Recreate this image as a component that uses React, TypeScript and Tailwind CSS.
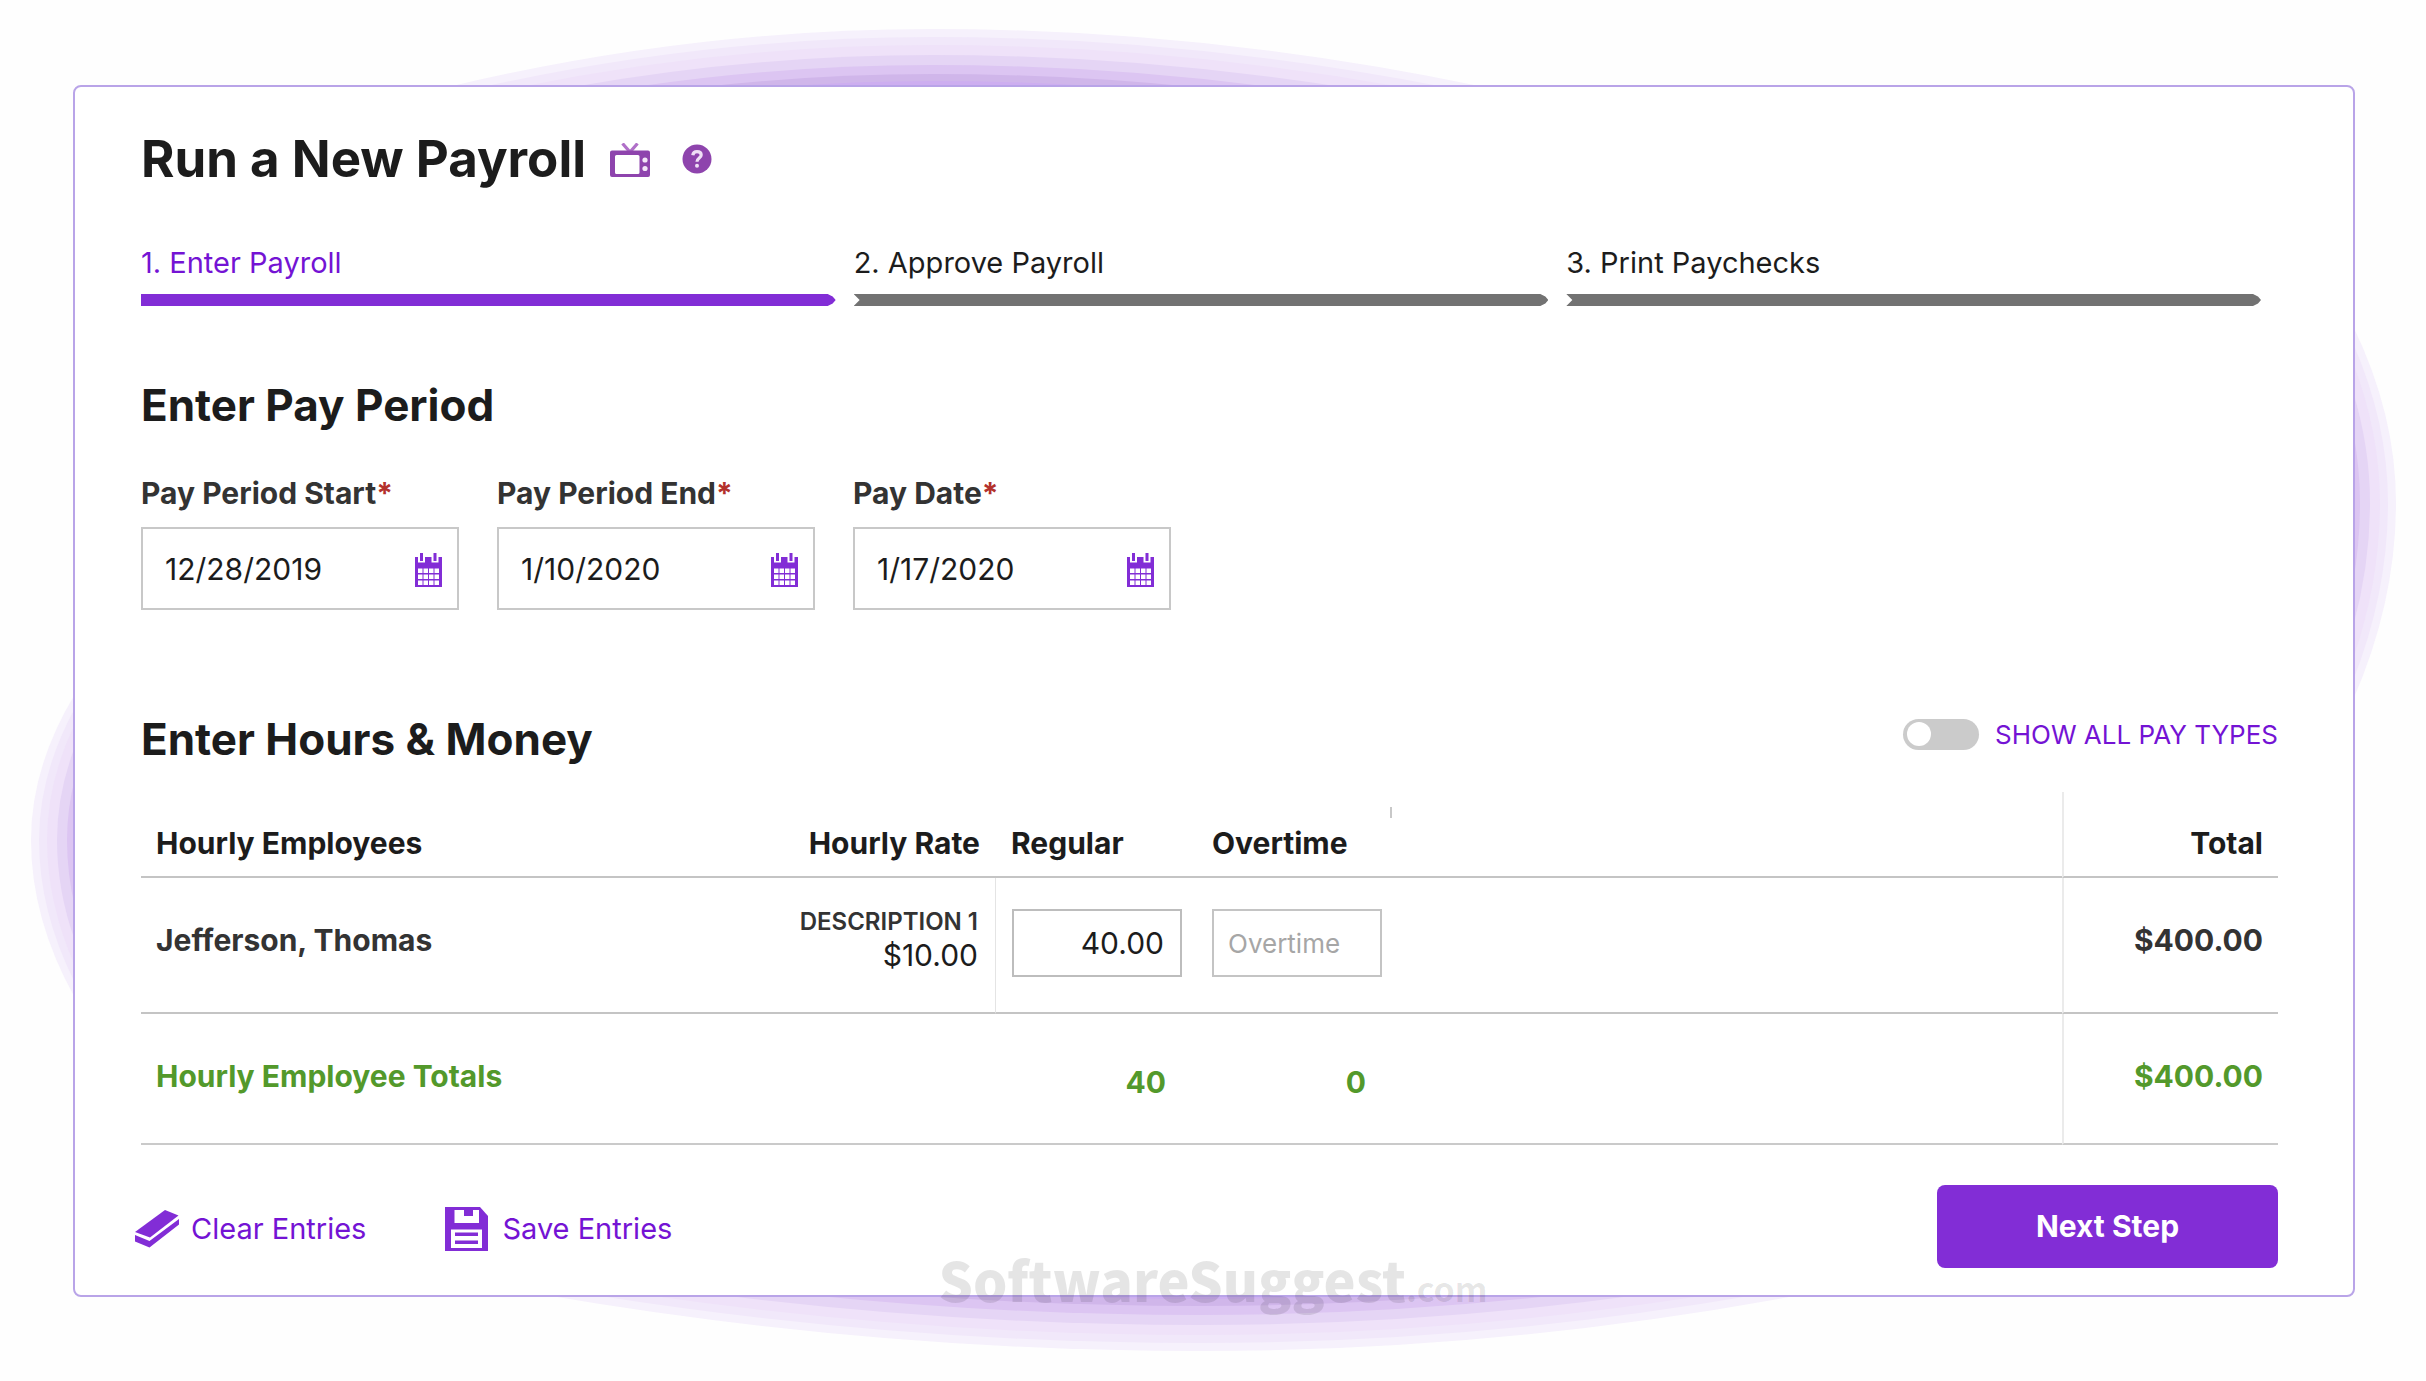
import { useState } from "react";

const RING_COLORS = ["#f6f1fc", "#f1e8fa", "#efe2f9", "#e5d5f5", "#dcc5f2", "#d0b6ea", "#cdaef0"];

const RING_DEPTHS = [0, 8, 16, 26, 36, 45, 52];

// A set of nested bulges that grow out of one side of the card.
function bulge(side: "top" | "bottom" | "left" | "right", base: number, start: number, peak: number, end: number, height: number) {
  return RING_DEPTHS.filter((depth) => height - depth > 2).map((depth, i) => {
    const h = height - depth;
    const k = Math.sqrt(h / height);
    const a = peak - (peak - start) * k;
    const b = peak + (end - peak) * k;
    const tip = side === "top" || side === "left" ? base - h : base + h;
    const p = (along: number, across: number) =>
      side === "top" || side === "bottom" ? `${along} ${across}` : `${across} ${along}`;
    const d = `M${p(a, base)} Q${p((a + peak) / 2, tip)} ${p(peak, tip)} Q${p((b + peak) / 2, tip)} ${p(b, base)} Z`;
    return <path key={side + i} d={d} fill={RING_COLORS[i]} />;
  });
}

function Backdrop() {
  return (
    <svg className="absolute inset-0 h-full w-full" viewBox="0 0 2426 1381" preserveAspectRatio="none" aria-hidden="true">
      {bulge("top", 87, 448, 932, 1484, 58)}
      {bulge("bottom", 1295, 545, 1200, 1800, 56)}
      {bulge("left", 75, 694, 840, 998, 44)}
      {bulge("right", 2353, 326, 503, 700, 43)}
    </svg>
  );
}

function TvIcon() {
  return (
    <svg width="40" height="34" viewBox="0 0 40 34" aria-hidden="true">
      <path d="M12.500 .5l7.500 8.500 7.500-8.500" fill="none" stroke="#b070c8" strokeWidth="3.200" />
      <path fillRule="evenodd" fill="#8e44ad" d="M2 7.500h36a2 2 0 0 1 2 2V32a2 2 0 0 1-2 2H2a2 2 0 0 1-2-2V9.500a2 2 0 0 1 2-2ZM6.500 12a1.500 1.500 0 0 0-1.500 1.500v16A1.500 1.500 0 0 0 6.500 31H28a1.500 1.500 0 0 0 1.500-1.500v-16A1.500 1.500 0 0 0 28 12Z" />
      <circle cx="35" cy="17" r="2.600" fill="#f3e6f8" />
      <circle cx="35" cy="25.500" r="2.600" fill="#f3e6f8" />
    </svg>
  );
}

function HelpIcon() {
  return (
    <svg width="30" height="30" viewBox="0 0 30 30" aria-hidden="true">
      <circle cx="15" cy="15" r="14.500" fill="#8e44ad" />
      <path d="M10.800 11.200c.3-2.400 1.900-3.600 4.200-3.600 2.500 0 4.200 1.300 4.200 3.400 0 3.200-4.200 3-4.200 6.800" fill="none" stroke="#efdff5" strokeWidth="3.200" />
      <circle cx="15" cy="21.800" r="2" fill="#efdff5" />
    </svg>
  );
}

function CalendarIcon() {
  return (
    <svg width="27" height="34" viewBox="0 0 27 34" aria-hidden="true">
      <path fill="#822dd6" d="M0 4h3v5.500h7V4h6.500v5.500h7V4H27v30H0Z" />
      <path fill="#822dd6" d="M5 0h3v8H5zM18.500 0h3v8h-3z" />
      <g fill="#fff">
        {[15.5, 21.5, 27.5].map((y) =>
          [3, 8.5, 14, 19.5].map((x) => <rect key={`${x}-${y}`} x={x} y={y} width="4.500" height="4.500" />),
        )}
      </g>
    </svg>
  );
}

function EraserIcon() {
  return (
    <svg width="44" height="38" viewBox="0 0 44 38" fill="#822dd6" aria-hidden="true">
      <path d="M30 0l13.500 5.500L15 27.500 0 22Z" />
      <path d="M0 25l14.500 6L44 9v5.500L14.500 37.500 0 31.500Z" />
    </svg>
  );
}

function SaveIcon() {
  return (
    <svg width="43" height="44" viewBox="0 0 43 44" aria-hidden="true">
      <path d="M0 0h35l8 9v35H0Z" fill="#822dd6" />
      <path d="M9.500 3H19v6h9V3h6v13H9.500Z" fill="#fff" />
      <path d="M6 22.500h31V41H6Z" fill="#fff" />
      <path d="M10 25.500h23v3.500H10zM10 33.500h23V37H10z" fill="#822dd6" />
    </svg>
  );
}

const STEPS = ["1. Enter Payroll", "2. Approve Payroll", "3. Print Paychecks"];

function Steps() {
  return (
    <ol className="mt-[54px] mr-[17px] grid grid-cols-3 gap-[18px]">
      {STEPS.map((s, i) => (
        <li key={s} aria-current={i === 0 ? "step" : undefined}>
          <span className={i === 0 ? "block text-[29px] leading-10 text-[#7413d4]" : "block text-[29px] leading-10 text-[#1c1c1c]"}>{s}</span>
          <div
            className={
              i === 0
                ? "mt-[11px] h-3 bg-[#822dd6] [clip-path:polygon(0_0,calc(100%-8px)_0,calc(100%-3px)_20%,100%_50%,calc(100%-3px)_80%,calc(100%-8px)_100%,0_100%)]"
                : "mt-[11px] h-3 bg-[#727272] [clip-path:polygon(0_0,calc(100%-8px)_0,calc(100%-3px)_20%,100%_50%,calc(100%-3px)_80%,calc(100%-8px)_100%,0_100%,6px_50%)]"
            }
          />
        </li>
      ))}
    </ol>
  );
}

function DateField({ id, label, value }: { id: string; label: string; value: string }) {
  return (
    <div className="w-[318px]">
      <label htmlFor={id} className="block text-[30px] leading-10 font-bold text-[#333]">
        {label}
        <span className="text-[#b3312c]">*</span>
      </label>
      <div className="mt-3.5 flex h-[83px] items-center border-2 border-[#c8c8c8] bg-white pr-[15px] pl-[22px]">
        <input id={id} defaultValue={value} className="w-0 flex-1 bg-transparent text-[30px] leading-10 text-[#1c1c1c] outline-none" />
        <button type="button" aria-label={`Pick ${label}`} className="pt-0.5">
          <CalendarIcon />
        </button>
      </div>
    </div>
  );
}

function HoursTable() {
  return (
    <table className="mt-[27px] w-full table-fixed border-separate border-spacing-0 text-[30px] leading-10 text-[#1c1c1c]">
      <colgroup>
        <col className="w-[599px]" />
        <col className="w-[255px]" />
        <col className="w-[201px]" />
        <col className="w-[200px]" />
        <col />
        <col className="w-[216px]" />
      </colgroup>
      <thead>
        <tr className="[&>th]:border-b-2 [&>th]:border-b-[#c4c4c4] [&>th]:pt-[31px] [&>th]:pb-[13px] [&>th]:font-bold">
          <th scope="col" className="pl-[15px] text-left">Hourly Employees</th>
          <th scope="col" className="pr-[15px] text-right">Hourly Rate</th>
          <th scope="col" className="pl-4 text-left">Regular</th>
          <th scope="col" className="relative pl-4 text-left">
            Overtime
            <span className="absolute top-[15px] right-1 h-[11px] w-0.5 bg-[#c8c8c8]" />
          </th>
          <td className="border-b-2 border-b-[#c4c4c4]" />
          <th scope="col" className="border-l-2 border-l-[#ebebeb] pr-[15px] text-right">Total</th>
        </tr>
      </thead>
      <tbody>
        <tr className="align-top [&>*]:border-b-2 [&>*]:border-b-[#c4c4c4]">
          <th scope="row" className="pt-[42px] pl-[15px] text-left font-bold text-[#333]">Jefferson, Thomas</th>
          <td className="pt-[29px] pr-[17px] text-right">
            <div className="text-[24px] leading-[30px] font-semibold text-[#333]">DESCRIPTION 1</div>
            <div className="leading-9">$10.00</div>
          </td>
          <td className="border-l border-l-[#e4e4e4] pt-[31px] pb-[35px] pl-4">
            <input
              aria-label="Regular hours"
              defaultValue="40.00"
              className="block h-[68px] w-[170px] border-2 border-[#bdbdbd] bg-white pr-4 pl-3 text-right text-[30px] outline-none"
            />
          </td>
          <td className="pt-[31px] pb-[35px] pl-4">
            <input
              aria-label="Overtime hours"
              placeholder="Overtime"
              className="block h-[68px] w-[170px] border-2 border-[#c4c4c4] bg-white px-3.5 text-[26px] outline-none placeholder:text-[#a6a6a6]"
            />
          </td>
          <td />
          <td className="border-l-2 border-l-[#ebebeb] pt-[42px] pr-[15px] text-right font-bold text-[#333]">$400.00</td>
        </tr>
        <tr className="align-top font-bold text-[#53992b] [&>*]:border-b-2 [&>*]:border-b-[#cacaca]">
          <th scope="row" className="pt-[42px] pb-[47px] pl-[15px] text-left font-bold">Hourly Employee Totals</th>
          <td />
          <td className="pt-12 pr-[30px] text-right">40</td>
          <td className="pt-12 pr-[30px] text-right">0</td>
          <td />
          <td className="border-l-2 border-l-[#ebebeb] pt-[42px] pr-[15px] text-right">$400.00</td>
        </tr>
      </tbody>
    </table>
  );
}

export default function App() {
  const [showAll, setShowAll] = useState(false);
  return (
    <div className="relative min-h-screen bg-[#fefefe] pt-[85px] pr-[71px] pb-[84px] pl-[73px] font-['Inter',sans-serif]">
      <Backdrop />
      <main className="relative rounded-lg border-2 border-[#b9a4e8] bg-white pt-[42px] pr-[75px] pb-[27px] pl-[66px]">
        <header className="flex h-[60px] items-center">
          <h1 className="text-[51px] leading-[60px] font-bold text-[#1c1c1c]">Run a New Payroll</h1>
          <button type="button" aria-label="Watch video" className="ml-6 pt-0.5">
            <TvIcon />
          </button>
          <button type="button" aria-label="Help" className="ml-8">
            <HelpIcon />
          </button>
        </header>

        <Steps />

        <section>
          <h2 className="mt-[73px] text-[44px] leading-[52px] font-bold text-[#1c1c1c]">Enter Pay Period</h2>
          <div className="mt-[42px] flex gap-[38px]">
            <DateField id="start" label="Pay Period Start" value="12/28/2019" />
            <DateField id="end" label="Pay Period End" value="1/10/2020" />
            <DateField id="date" label="Pay Date" value="1/17/2020" />
          </div>
        </section>

        <section>
          <div className="mt-[103px] flex items-start justify-between">
            <h2 className="text-[44px] leading-[52px] font-bold text-[#1c1c1c]">Enter Hours &amp; Money</h2>
            <label className="flex h-[42px] cursor-pointer items-center gap-4 text-[26px] text-[#7413d4]">
              <input
                type="checkbox"
                role="switch"
                checked={showAll}
                onChange={(e) => setShowAll(e.target.checked)}
                className="flex h-[31px] w-[76px] appearance-none items-center rounded-full bg-[#cbcbcb] px-1 before:size-6 before:rounded-full before:bg-white before:content-[''] checked:justify-end checked:bg-[#822dd6]"
              />
              SHOW ALL PAY TYPES
            </label>
          </div>
          <HoursTable />
        </section>

        <footer className="mt-10 flex items-center">
          <button type="button" className="-ml-1.5 flex items-center gap-3 pt-1 text-[29px] leading-10 text-[#7413d4]">
            <EraserIcon />
            Clear Entries
          </button>
          <button type="button" className="ml-[79px] flex items-center gap-3.5 pt-1 text-[29px] leading-10 text-[#7413d4]">
            <SaveIcon />
            Save Entries
          </button>
          <button type="button" className="ml-auto h-[83px] w-[341px] rounded-lg bg-[#822dd6] text-[30px] font-bold text-white">
            Next Step
          </button>
        </footer>
      </main>
      <div className="pointer-events-none absolute inset-x-0 bottom-[58px] text-center font-['Noto_Sans_CJK_SC',sans-serif] text-[54px] leading-[70px] font-black text-black/10">
        SoftwareSuggest<span className="text-[34px] font-bold">.com</span>
      </div>
    </div>
  );
}
